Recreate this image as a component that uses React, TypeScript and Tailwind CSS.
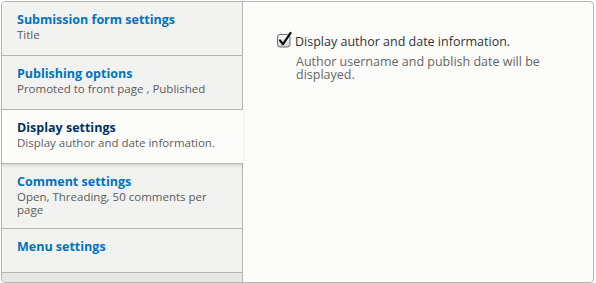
import React from 'react';

type Tab = {
    title: string;
    summary?: string;
    height: string;
    selected?: boolean;
};

const tabs: Tab[] = [
    { title: 'Submission form settings', summary: 'Title', height: 'h-[54px]' },
    { title: 'Publishing options', summary: 'Promoted to front page , Published', height: 'h-[54px]' },
    { title: 'Display settings', summary: 'Display author and date information.', height: 'h-[54px]', selected: true },
    { title: 'Comment settings', summary: 'Open, Threading, 50 comments per page', height: 'h-[65px]' },
    { title: 'Menu settings', height: 'h-[44px]' },
];

function MacCheckbox() {
    return (
        <svg width="17" height="17" viewBox="0 0 17 17" className="shrink-0 -mt-[2px]">
            <defs>
                <linearGradient id="cbg" x1="0" y1="0" x2="0" y2="1">
                    <stop offset="0" stopColor="#ffffff" />
                    <stop offset="1" stopColor="#d0d0d0" />
                </linearGradient>
            </defs>
            <rect x="0.5" y="3.5" width="12.5" height="12.5" rx="2.5" fill="url(#cbg)" stroke="#6a6a6a" />
            <path d="M3 9.4 L6 13.2 L13.6 1.8" fill="none" stroke="#111" strokeWidth="2.2" strokeLinecap="round" strokeLinejoin="round" />
        </svg>
    );
}

export default function App() {
    return (
        <div className="w-[596px] h-[283px] bg-white pl-[1px] pt-[1px]" style={{ fontFamily: '"Open Sans", Arial, sans-serif' }}>
            <div className="w-[593px] h-[282px] flex border border-[#b4b4b4] rounded-[4px] bg-[#fcfcfa] overflow-hidden">
                {/* tab list */}
                <div className="w-[241px] shrink-0 flex flex-col bg-[#e6e6e4] border-r border-[#b4b4b4]">
                    {tabs.map((tab) => (
                        <div
                            key={tab.title}
                            className={`${tab.height} pt-[9px] pl-[15px] pr-[14px] border-b border-[#b4b4b4] ${
                                tab.selected
                                    ? 'bg-[#fcfcfa] -mr-[1px] relative z-10 shadow-[0_2px_3px_rgba(0,0,0,0.12)]'
                                    : 'bg-[#f2f2f0]'
                            }`}
                        >
                            <div className={`text-[12.5px] leading-[17px] font-bold ${tab.selected ? 'text-[#04325e]' : 'text-[#0074bd]'}`}>
                                {tab.title}
                            </div>
                            {tab.summary && (
                                <div className="text-[11.5px] leading-[13px] text-[#5c5c5c]">{tab.summary}</div>
                            )}
                        </div>
                    ))}
                </div>

                {/* pane */}
                <div className="flex-1 pl-[34px] pt-[31px]">
                    <div className="flex items-start gap-[1px]">
                        <MacCheckbox />
                        <span className="text-[12.5px] leading-[18px] text-[#333]">Display author and date information.</span>
                    </div>
                    <div className="ml-[19px] mt-[4px] w-[250px] text-[12.5px] leading-[13px] text-[#666]">
                        Author username and publish date will be displayed.
                    </div>
                </div>
            </div>
        </div>
    );
}
